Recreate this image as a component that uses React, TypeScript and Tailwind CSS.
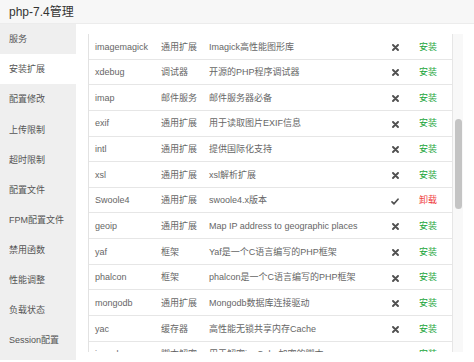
import React from "react";

const menu = ["服务", "安装扩展", "配置修改", "上传限制", "超时限制", "配置文件", "FPM配置文件", "禁用函数", "性能调整", "负载状态", "Session配置"];

type Row = { name: string; type: string; desc: string; installed: boolean };
const rows: Row[] = [
  { name: "imagemagick", type: "通用扩展", desc: "Imagick高性能图形库", installed: false },
  { name: "xdebug", type: "调试器", desc: "开源的PHP程序调试器", installed: false },
  { name: "imap", type: "邮件服务", desc: "邮件服务器必备", installed: false },
  { name: "exif", type: "通用扩展", desc: "用于读取图片EXIF信息", installed: false },
  { name: "intl", type: "通用扩展", desc: "提供国际化支持", installed: false },
  { name: "xsl", type: "通用扩展", desc: "xsl解析扩展", installed: false },
  { name: "Swoole4", type: "通用扩展", desc: "swoole4.x版本", installed: true },
  { name: "geoip", type: "通用扩展", desc: "Map IP address to geographic places", installed: false },
  { name: "yaf", type: "框架", desc: "Yaf是一个C语言编写的PHP框架", installed: false },
  { name: "phalcon", type: "框架", desc: "phalcon是一个C语言编写的PHP框架", installed: false },
  { name: "mongodb", type: "通用扩展", desc: "Mongodb数据库连接驱动", installed: false },
  { name: "yac", type: "缓存器", desc: "高性能无锁共享内存Cache", installed: false },
  { name: "ioncube", type: "脚本解密", desc: "用于解密ionCube加密的脚本", installed: false },
];

const Cross = () => (
  <svg width="7" height="7" viewBox="0 0 7 7">
    <path d="M1 1 L6 6 M6 1 L1 6" stroke="#505050" strokeWidth="1.9" strokeLinecap="round" />
  </svg>
);

const Check = () => (
  <svg width="8" height="7" viewBox="0 0 8 7">
    <path d="M1 3.8 L3 5.8 L7 1.2" stroke="#505050" strokeWidth="1.7" fill="none" strokeLinecap="round" strokeLinejoin="round" />
  </svg>
);

export default function App() {
  return (
    <div
      className="w-[474px] h-[362px] bg-white overflow-hidden"
      style={{ fontFamily: '"Liberation Sans", "Noto Sans CJK SC", sans-serif' }}
    >
      <div className="h-[24px] bg-[#f7f7f7] border-b border-[#ececec] flex items-center pl-[9px] pt-[1px] text-[12px] text-[#333]">
        php-7.4管理
      </div>
      <div className="flex">
        <div className="w-[76px] h-[336px] bg-[#efefef] flex flex-col">
          {menu.map((m, i) => (
            <div
              key={m}
              className={`h-[30.1px] flex items-center pl-[9px] pt-[2px] text-[9px] text-[#555] ${i === 1 ? "bg-white" : ""}`}
            >
              {m}
            </div>
          ))}
        </div>
        <div className="pl-[12px] pt-[10px]">
          <div className="w-[375px] h-[318px] overflow-hidden flex">
            <div className="w-[364px] border-l border-[#e2e2e2] flex flex-col">
              {rows.map((r) => (
                <div
                  key={r.name}
                  className="h-[25.65px] shrink-0 border-b border-[#e6e6e6] flex items-center pt-[2px] text-[9px] text-[#666]"
                >
                  <div className="w-[66px] pl-[6px] shrink-0">{r.name}</div>
                  <div className="w-[48px] pl-[6px] shrink-0">{r.type}</div>
                  <div className="w-[177px] pl-[6px] shrink-0 whitespace-nowrap">{r.desc}</div>
                  <div className="w-[30px] shrink-0 flex justify-center">{r.installed ? <Check /> : <Cross />}</div>
                  <div className={`pl-[9px] ${r.installed ? "text-[#ef3b3b]" : "text-[#20a53a]"}`}>
                    {r.installed ? "卸载" : "安装"}
                  </div>
                </div>
              ))}
            </div>
            <div className="w-[11px] h-full border-l border-[#e6e6e6] bg-[#f8f8f8] pt-[85px]">
              <div className="ml-[2px] w-[7px] h-[90px] rounded-full bg-[#c4c4c4]" />
            </div>
          </div>
        </div>
      </div>
    </div>
  );
}
